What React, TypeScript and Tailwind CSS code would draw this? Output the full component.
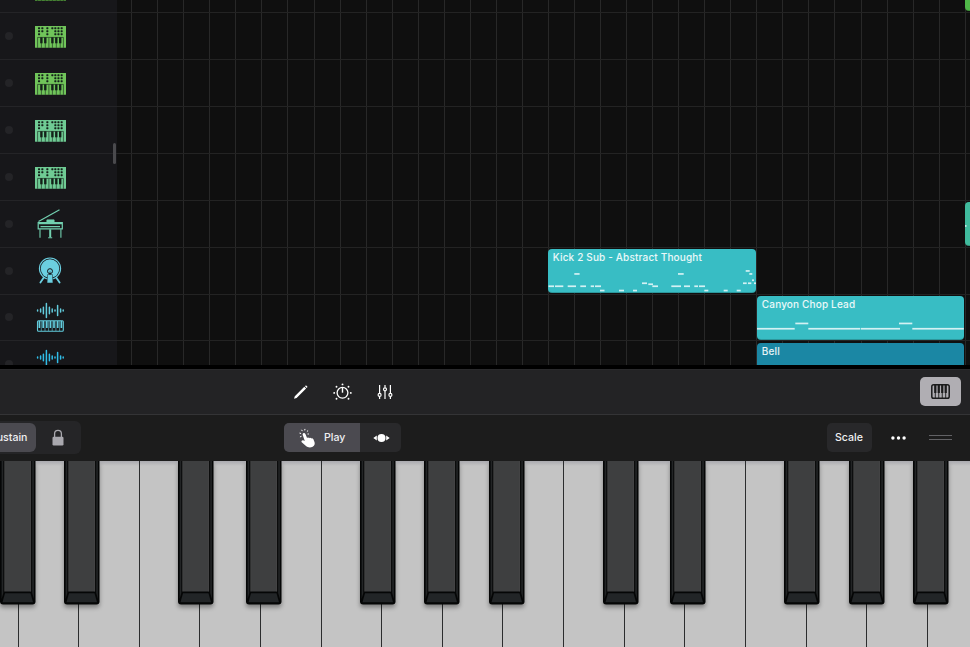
import React from 'react';

type TrackKind = 'synth' | 'piano' | 'drum' | 'sampler';
type Note = [x: number, y: number, w: number];

interface Clip {
  name: string;
  className: string;
  notes: Note[];
}

interface Track {
  kind: TrackKind;
  color: string;
  clip?: Clip;
}

const KICK_NOTES: Note[] = [
  [26.3, 25, 5.3], [130, 25, 5.7],
  [0.5, 37.3, 5.5], [7, 37.3, 8.3], [19.7, 37.3, 8.3], [32.3, 37.3, 5.7], [42.7, 37.3, 3.3], [47, 37.3, 6],
  [52, 41.6, 4.5], [71, 41.6, 5], [85, 41.6, 4],
  [94, 34.3, 5], [100.3, 35.3, 4.7], [104.3, 37.3, 5.7],
  [123.3, 37.3, 9.7], [136, 37.3, 6], [146.3, 37.3, 3.7], [151, 37.3, 6],
  [156.3, 41.6, 4], [175.7, 41.6, 4], [188.7, 41.6, 4],
  [197.7, 22, 4], [201.3, 25, 3], [204, 31.3, 2], [195, 34.3, 3.7], [200, 34.3, 3.3], [206, 34.3, 2],
];

const CANYON_NOTES: Note[] = [
  [0, 32.8, 37.7], [38.3, 27.5, 13], [51.3, 32.8, 51.7], [103.7, 32.8, 39.3], [142, 27.5, 13.3], [155.3, 32.8, 51.5],
];

const TRACKS: Track[] = [
  { kind: 'synth', color: 'text-[#57a53c]', clip: { name: '', className: 'ml-[848.4px] w-[207px] bg-[#4fb848]', notes: [] } },
  { kind: 'synth', color: 'text-[#70c45a]' },
  { kind: 'synth', color: 'text-[#70c45a]' },
  { kind: 'synth', color: 'text-[#6fcb94]' },
  { kind: 'synth', color: 'text-[#6fcb94]' },
  { kind: 'piano', color: 'text-[#72d0b0]', clip: { name: '', className: 'ml-[848.4px] w-[207px] bg-[#40bb9d]', notes: [[0, 24, 1.5]] } },
  { kind: 'drum', color: 'text-[#6bcfe0]', clip: { name: 'Kick 2 Sub - Abstract Thought', className: 'ml-[431px] w-[208px] bg-[#38bdc4]', notes: KICK_NOTES } },
  { kind: 'sampler', color: 'text-[#62cbdc]', clip: { name: 'Canyon Chop Lead', className: 'ml-[640px] w-[207.4px] bg-[#38bdc4]', notes: CANYON_NOTES } },
  { kind: 'sampler', color: 'text-[#30bde8]', clip: { name: 'Bell', className: 'ml-[640px] w-[207.4px] bg-[#1b87a4]', notes: [] } },
];

const BLACK_KEYS = [0.3, 64.3, 178.3, 246.3, 360.2, 424.4, 488.8, 602.8, 670.4, 784.4, 849, 913];

const SynthIcon = () => (
  <svg className="relative top-[0.7px]" width="31" height="22" viewBox="0 0.2 31 22">
    <rect width="31" height="22" rx="0.5" fill="currentColor" />
    <g fill="#14221a">
      {[3, 6.3, 11.3, 16.3, 19.3, 22.4, 25.6].map((x) => <rect key={x} x={x} y="1.4" width="2.1" height="2" rx="0.6" />)}
      {[3, 6.3, 11.3, 19.3, 22.4, 25.6].map((x) => <rect key={x} x={x} y="4.4" width="2.1" height="2" rx="0.6" />)}
      {[3, 11.3, 19.3, 22.4, 25.6].map((x) => <rect key={x} x={x} y="7.4" width="2.1" height="2" rx="0.6" />)}
      {[5.2, 9.1, 16.2, 20.1, 24].map((x) => <rect key={x} x={x} y="11.5" width="2.4" height="6" />)}
    </g>
    <path d="M2.6 22V11.6H28.4V22M6.4 12v10M10.3 12v10M13.9 12v10M17.4 12v10M21.3 12v10M25.2 12v10" fill="none" stroke="#14221a" strokeWidth="0.6" />
  </svg>
);

const PianoIcon = () => (
  <svg className="mr-[1px]" width="26" height="30" viewBox="-0.5 0.7 26 30" fill="none" stroke="currentColor">
    <path d="M1 13.2 22 1.4" strokeWidth="1.2" />
    <path d="M9.4 14v-2.4h7.2V14" fill="currentColor" strokeWidth="0.8" />
    <path d="M0.7 14.2h24.1v6.4H0.7z" strokeWidth="1.2" />
    <path d="M1 15.2h23.5M3 18.3h19.5" strokeWidth="1.4" />
    <path d="M2.5 21v8.5M23.4 21v8.500M10.7 29.4h4" strokeWidth="1.1" />
    <path d="M12.7 21v8" strokeWidth="2" />
  </svg>
);

const DrumIcon = () => (
  <svg className="mr-[1px]" width="24" height="27" viewBox="0 0 24 27">
    <path d="M6 20.2 2.4 25.6M18 20.2 21.6 25.6" stroke="currentColor" strokeWidth="1.8" strokeLinecap="round" />
    <circle cx="12" cy="11.6" r="10.6" fill="#17171a" stroke="currentColor" strokeWidth="1.1" />
    <circle cx="12" cy="11.6" r="9.3" fill="currentColor" />
    <path d="M9.6 17.5 9 26h6l-.6-8.5z" fill="currentColor" stroke="#17171a" strokeWidth="0.5" />
    <circle cx="12" cy="14.2" r="2.5" fill="currentColor" stroke="#17171a" strokeWidth="1" />
    <path d="M12 14.5v3.5" stroke="#17171a" strokeWidth="0.8" />
  </svg>
);

const SamplerIcon = () => (
  <svg className="mr-[1px]" width="28" height="30" viewBox="-0.6 0 28 30" fill="none" stroke="currentColor">
    <path d="M1 7.9v1.2M4 7v3M6.8 5.2v6.6M9.8 1.6v14M12.8 5.2v6.6M15.6 7v3M18.4 8v1M21 3.5v10M24 7v3M26.6 7.9v1.2" strokeWidth="1.5" strokeLinecap="round" />
    <rect x="0.9" y="18.8" width="25.8" height="10.4" rx="1" strokeWidth="1.1" />
    <path d="M4.7 19v10M8.4 19v10M12 19v10M15.6 19v10M19.3 19v10M23 19v10" strokeWidth="0.6" />
    <path d="M2.8 19v7M6.6 19v7M10.2 19v7M13.8 19v7M17.4 19v7M21.1 19v7M24.8 19v7" strokeWidth="1.7" />
  </svg>
);

const TRACK_ICONS: Record<TrackKind, React.FC> = {
  synth: SynthIcon,
  piano: PianoIcon,
  drum: DrumIcon,
  sampler: SamplerIcon,
};

const TrackHeader: React.FC<{ track: Track }> = ({ track }) => {
  const Icon = TRACK_ICONS[track.kind];
  return (
    <div className="flex h-[46.9px] shrink-0 items-center border-b border-[#242427] pl-[5px]">
      <span className="size-[8px] rounded-full bg-[#242427]" />
      <span className={`ml-[17px] flex w-[41px] justify-center ${track.color}`}>
        <Icon />
      </span>
    </div>
  );
};

const Lane: React.FC<{ clip?: Clip }> = ({ clip }) => (
  <div className="h-[46.9px] shrink-0 border-b border-[#232323] pt-[1.1px]">
    {clip && (
      <div className={`relative h-[43.9px] overflow-hidden rounded-[4px] border-b border-black/20 ${clip.className}`}>
        <div className="whitespace-nowrap pl-[4.8px] pt-[1px] text-[10px] font-medium leading-[14px] tracking-[0.16px] text-white/90">{clip.name}</div>
        <svg className="absolute inset-0" width="208" height="44" fill="#d3f1f3">
          {clip.notes.map(([x, y, w], i) => (
            <rect key={i} x={x} y={y - 0.9} width={w} height="1.7" />
          ))}
        </svg>
      </div>
    )}
  </div>
);

const Arrangement = () => (
  <div className="relative flex h-[365px] shrink-0 overflow-hidden">
    <div className="flex w-[117px] shrink-0 flex-col bg-[#17171a]">
      <div className="-mt-[33.7px] flex flex-col">
        {TRACKS.map((track, i) => <TrackHeader key={i} track={track} />)}
      </div>
    </div>
    <div className="relative min-w-0 flex-1 overflow-hidden bg-[#0f0f0f]">
      <div className="absolute inset-0 flex pl-[14.2px]">
        {Array.from({ length: 33 }, (_, i) => (
          <div key={i} className="w-[26.05px] shrink-0 border-l border-[#282828]" />
        ))}
      </div>
      <div className="relative -mt-[33.7px] flex w-[1100px] flex-col">
        {TRACKS.map((track, i) => <Lane key={i} clip={track.clip} />)}
      </div>
    </div>
    <div className="absolute left-[113px] top-[143px] h-[21px] w-[3px] rounded-full bg-[#4a4a4d]" />
  </div>
);

const EditorBar = () => (
  <div className="flex h-[46px] shrink-0 items-center border-y border-b-[#343436] border-t-[#2a2a2c] bg-[#232325] pl-[292px] pr-[9px] text-white">
    <svg width="17" height="17" viewBox="0 0 17 17" fill="currentColor">
      <path d="m2 14.8.8-2.5L12.3 2.8l1.8 1.8-9.5 9.5zM13 2.2l.6-.6c.7-.6 2.3 1 1.7 1.7l-.6.6z" />
    </svg>
    <svg className="ml-[23px]" width="21" height="21" viewBox="0 0 21 21" fill="none" stroke="currentColor">
      <circle cx="10.5" cy="10.8" r="5.4" strokeWidth="1.3" />
      <path d="M10.5 5.2v5.5" strokeWidth="1.4" />
      <g fill="currentColor" stroke="none">
        <circle cx="4.5" cy="4.8" r="0.95" /><circle cx="10.5" cy="2.4" r="0.95" /><circle cx="16.5" cy="4.8" r="0.95" />
        <circle cx="2.2" cy="10.9" r="0.95" /><circle cx="18.8" cy="10.9" r="0.95" />
        <circle cx="4.5" cy="16.7" r="0.95" /><circle cx="16.5" cy="16.7" r="0.95" />
      </g>
    </svg>
    <svg className="ml-[24px]" width="16" height="16" viewBox="0 0 16 16" fill="none" stroke="currentColor" strokeWidth="1.2">
      <path d="M2.6 1v8.4M2.6 12.4V15M8 1v2.8M8 6.8V15M13.4 1v8.4M13.4 12.4V15" />
      <circle cx="2.6" cy="10.9" r="1.5" /><circle cx="8" cy="5.3" r="1.5" /><circle cx="13.4" cy="10.9" r="1.5" />
    </svg>
    <button className="-mt-[2px] ml-auto flex h-[29px] w-[41px] items-center justify-center rounded-[5px] bg-[#b0aeb3] text-[#1b1b1c]">
      <svg width="19" height="15" viewBox="0 0 19 15" fill="none" stroke="currentColor">
        <rect x="0.8" y="0.8" width="17.4" height="13.4" rx="1.8" strokeWidth="1.5" />
        <path d="M4.3 1v13M7.75 1v13M11.25 1v13M14.7 1v13" strokeWidth="0.9" />
        <path d="M4.3 1v8M7.75 1v8M11.25 1v8M14.7 1v8" strokeWidth="2.2" />
      </svg>
    </button>
  </div>
);

const KeyboardBar = () => (
  <div className="flex h-[46px] shrink-0 items-center bg-[#1c1c1c] pb-[1px] text-[10.6px] font-medium text-[#f0f0f2]">
    <div className="-ml-[59px] flex h-[33px] w-[140px] shrink-0 items-center rounded-[6px] bg-[#252527] pl-[2px]">
      <button className="h-[29px] w-[93px] rounded-[6px] bg-[#4b4a50] pr-[8.5px] text-right">Sustain</button>
      <svg className="ml-[16px]" width="12" height="17" viewBox="0 0 12 17">
        <path d="M2.6 8V4.7a3.4 3.4 0 0 1 6.8 0V8" fill="none" stroke="#a9a8ae" strokeWidth="1.3" />
        <rect x="0.5" y="7.8" width="11" height="8.7" rx="1.2" fill="#a9a8ae" />
      </svg>
    </div>
    <div className="ml-[203px] flex h-[29px] w-[117px] shrink-0 overflow-hidden rounded-[5px] bg-[#29292b]">
      <button className="flex w-[76px] items-center bg-[#4b4a50] pl-[15px]">
        <svg width="19" height="20" viewBox="0 0 19 20" fill="white">
          <path d="M4.3 5.3c.8-.5 1.7-.1 2.1.8l1.7 4c.7-.7 1.7-.6 2.1.1.7-.6 1.7-.4 2.1.3.8-.4 1.7 0 2.1.8l.9 2.1c1 2.2.3 4.3-1.6 5.3-2.4 1.2-5.1.8-7-.9L3 14.5c-.9-.8-.6-1.9.3-2.1.9-.2 1.7.1 2.5.7L3.7 7c-.2-.7 0-1.4.6-1.7z" />
          <g stroke="white" strokeWidth="1" strokeLinecap="round">
            <path d="M2.2 8.4 1.3 8.8M1.7 5.4.9 5.2M3.2 2.8 2.7 2.1M5.8 2 5.9 1.3M8.2 3.3l.6-.5M8.9 6h.6" />
          </g>
        </svg>
        <span className="ml-[6px]">Play</span>
      </button>
      <button className="flex flex-1 items-center justify-center">
        <svg className="ml-[1px]" width="17" height="10" viewBox="0 0 17 10" fill="white">
          <circle cx="8.5" cy="5" r="4" />
          <path d="M3.8 2.6v4.8L0.3 5zM13.2 2.6v4.8L16.7 5z" />
        </svg>
      </button>
    </div>
    <div className="ml-auto flex items-center pr-[18px]">
      <button className="h-[29px] w-[45px] rounded-[5px] bg-[#28282a] pr-[1px] text-center">Scale</button>
      <svg className="ml-[19px]" width="15" height="4" viewBox="0 0 15 4" fill="white">
        <circle cx="1.9" cy="2" r="1.7" /><circle cx="7.5" cy="2" r="1.7" /><circle cx="13.1" cy="2" r="1.7" />
      </svg>
      <div className="ml-[23px] h-[5px] w-[23px] border-y border-[#626265]" />
    </div>
  </div>
);

const BlackKey: React.FC<{ x: number }> = ({ x }) => (
  <svg className="absolute top-0 drop-shadow-[0_3px_2px_rgba(0,0,0,0.35)]" style={{ left: x }} width="36" height="144" viewBox="0 0 36 144">
    <path d="M0 0h35.5v140.5q0 3-3 3h-29.5q-3 0-3-3z" fill="#050606" />
    <path d="M1.6 0h1.7v132L1.6 138zM32.2 0h1.7v138l-1.7-6z" fill="#222425" />
    <path d="M4.5 0h26.5v130.5H4.5z" fill="#3e3f40" />
    <path d="M4.8 0v130.5M30.7 0v130.5" stroke="#4a4c4d" strokeWidth="0.5" />
    <path d="M5 132.2h25.5l2.5 9H2.5z" fill="#222527" />
  </svg>
);

const Keyboard = () => (
  <div className="relative flex flex-1 overflow-hidden bg-[#c4c4c4]">
    <div className="-ml-[42px] flex">
      {Array.from({ length: 17 }, (_, i) => (
        <div key={i} className="w-[60.62px] shrink-0 border-r border-[#2b2d2e] bg-[linear-gradient(#aaaaaf,#c4c4c4_5px)]" />
      ))}
    </div>
    {BLACK_KEYS.map((x) => <BlackKey key={x} x={x} />)}
  </div>
);

export default function App() {
  return (
    <div className="flex h-[647px] w-[970px] flex-col overflow-hidden bg-black font-['Inter',sans-serif]">
      <Arrangement />
      <div className="h-[4px] shrink-0 bg-black" />
      <EditorBar />
      <KeyboardBar />
      <Keyboard />
    </div>
  );
}
